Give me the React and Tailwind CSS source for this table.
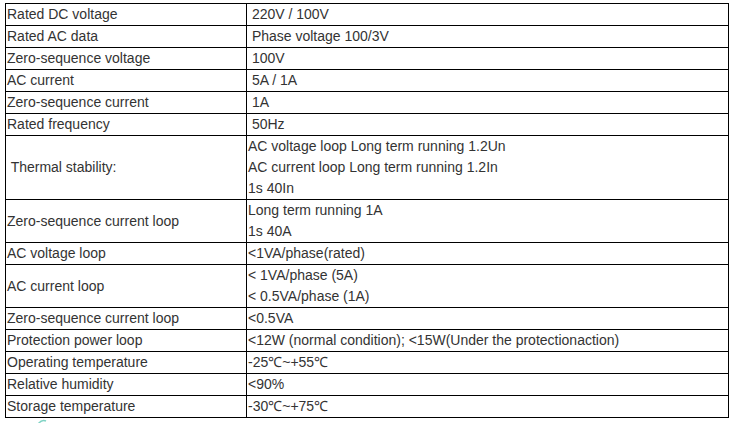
const rows = [
  { label: 'Rated DC voltage', value: [' 220V / 100V'] },
  { label: 'Rated AC data', value: [' Phase voltage 100/3V'] },
  { label: 'Zero-sequence voltage', value: [' 100V'] },
  { label: 'AC current', value: [' 5A / 1A'] },
  { label: 'Zero-sequence current', value: [' 1A'] },
  { label: 'Rated frequency', value: [' 50Hz'] },
  {
    label: ' Thermal stability:',
    value: [
      'AC voltage loop Long term running 1.2Un',
      'AC current loop Long term running 1.2In',
      '1s 40In',
    ],
  },
  { label: 'Zero-sequence current loop', value: ['Long term running 1A', '1s 40A'] },
  { label: 'AC voltage loop', value: ['<1VA/phase(rated)'] },
  { label: 'AC current loop', value: ['< 1VA/phase (5A)', '< 0.5VA/phase (1A)'] },
  { label: 'Zero-sequence current loop', value: ['<0.5VA'] },
  { label: 'Protection power loop', value: ['<12W (normal condition); <15W(Under the protectionaction)'] },
  { label: 'Operating temperature', value: ['-25℃~+55℃'] },
  { label: 'Relative humidity', value: ['<90%'] },
  { label: 'Storage temperature', value: ['-30℃~+75℃'] },
]

export default function App() {
  return (
    <div className="h-[423px] w-[737px] overflow-hidden bg-white pt-[3px] pl-[5px] font-['Liberation_Sans',Arial,sans-serif] text-[14px] text-[#333]">
      <table className="w-[724px] table-fixed border-collapse border border-black">
        <colgroup>
          <col className="w-[241px]" />
          <col />
        </colgroup>
        <tbody>
          {rows.map((row, i) => (
            <tr key={i}>
              <td className="whitespace-pre border border-black px-[1px] py-0 align-middle leading-[21px]">
                {row.label}
              </td>
              <td className="whitespace-pre border border-black px-[1px] py-0 align-middle leading-[21px]">
                {row.value.map((line, j) => (
                  <div key={j}>{line}</div>
                ))}
              </td>
            </tr>
          ))}
        </tbody>
      </table>
      <svg className="ml-[32px] mt-[1px] block" width="10" height="6" viewBox="0 0 10 6">
        <path d="M1 5 Q5 0 9 2" fill="none" stroke="#7fd3c4" strokeWidth="1.5" />
      </svg>
    </div>
  )
}
